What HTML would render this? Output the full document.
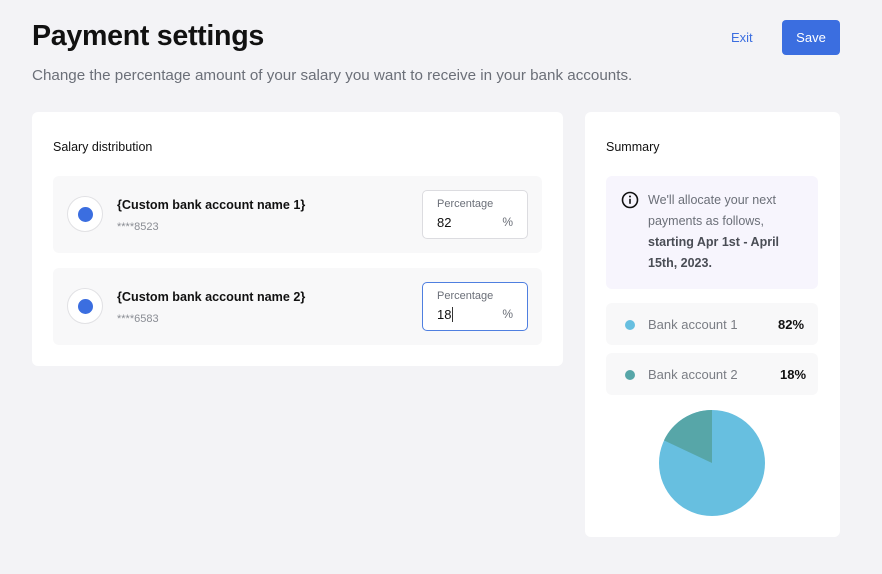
<!DOCTYPE html>
<html><head><style>
*{box-sizing:border-box;margin:0;padding:0}
body{width:882px;height:574px;background:#f3f3f6;font-family:"Liberation Sans",sans-serif;position:relative;overflow:hidden;color:#111}
.abs{position:absolute}
h1{position:absolute;left:32px;top:20px;font-size:28.6px;font-weight:700;color:#111;letter-spacing:-0.3px}
.sub{left:32px;top:67px;font-size:15.2px;color:#6b6f78}
.exit{left:731px;top:30px;font-size:13px;color:#3b6ee0}
.save{left:782px;top:20px;width:58px;height:35px;background:#3b6ee0;border-radius:4px;color:#fff;font-size:13px;text-align:center;line-height:35px}
.card{background:#fff;border-radius:6px}
.row{background:#f8f8f9;border-radius:6px}
.radio{width:36px;height:36px;border-radius:50%;border:1px solid #e1e1e4;background:#fff}
.radio:after{content:"";position:absolute;left:10px;top:10px;width:15px;height:15px;border-radius:50%;background:#3b6ee0}
.name{font-size:12.6px;font-weight:700}
.acct{font-size:11px;color:#8a8d94}
.inp{width:106px;height:49px;border:1px solid #dcdce0;border-radius:5px;background:#fff}
.inp .l{position:absolute;left:14px;top:7px;font-size:11px;color:#6b6f78}
.inp .v{position:absolute;left:14px;top:24px;font-size:13px}
.inp .p{position:absolute;right:14px;top:24px;font-size:12px;color:#6b6f78}
</style></head><body>
<h1>Payment settings</h1>
<div class="abs sub">Change the percentage amount of your salary you want to receive in your bank accounts.</div>
<div class="abs exit">Exit</div>
<div class="abs save">Save</div>

<div class="abs card" style="left:32px;top:112px;width:531px;height:254px"></div>
<div class="abs" style="left:53px;top:140px;font-size:12.5px">Salary distribution</div>

<div class="abs row" style="left:53px;top:176px;width:489px;height:77px"></div>
<div class="abs radio" style="left:67px;top:196px"></div>
<div class="abs name" style="left:117px;top:198px">{Custom bank account name 1}</div>
<div class="abs acct" style="left:117px;top:221px">****8523</div>
<div class="abs inp" style="left:422px;top:190px"><span class="l">Percentage</span><span class="v">82</span><span class="p">%</span></div>

<div class="abs row" style="left:53px;top:268px;width:489px;height:77px"></div>
<div class="abs radio" style="left:67px;top:288px"></div>
<div class="abs name" style="left:117px;top:290px">{Custom bank account name 2}</div>
<div class="abs acct" style="left:117px;top:313px">****6583</div>
<div class="abs inp" style="left:422px;top:282px;border-color:#4f7fe0"><span class="l">Percentage</span><span class="v">18<span style="display:inline-block;width:1px;height:15px;background:#333;vertical-align:-3px;margin-left:1px"></span></span><span class="p">%</span></div>

<div class="abs card" style="left:585px;top:112px;width:255px;height:425px"></div>
<div class="abs" style="left:606px;top:140px;font-size:12.5px">Summary</div>
<div class="abs" style="left:606px;top:176px;width:212px;height:113px;background:#f7f5fd;border-radius:6px"></div>
<svg class="abs" style="left:621px;top:191px" width="18" height="18" viewBox="0 0 18 18"><circle cx="9" cy="9" r="7.5" fill="none" stroke="#111" stroke-width="1.6"/><circle cx="9" cy="5.5" r="1" fill="#111"/><rect x="8.2" y="7.8" width="1.6" height="5" fill="#111"/></svg>
<div class="abs" style="left:648px;top:190px;width:150px;font-size:12.5px;line-height:21px;color:#6b6f78">We'll allocate your next payments as follows, <b style="color:#4a4d55">starting Apr 1st - April 15th, 2023.</b></div>

<div class="abs row" style="left:606px;top:303px;width:212px;height:42px"></div>
<div class="abs" style="left:625px;top:320px;width:10px;height:10px;border-radius:50%;background:#67bfe0"></div>
<div class="abs" style="left:648px;top:317px;font-size:13px;color:#7a7d84">Bank account 1</div>
<div class="abs" style="left:778px;top:317px;font-size:13px;font-weight:700">82%</div>
<div class="abs row" style="left:606px;top:353px;width:212px;height:42px"></div>
<div class="abs" style="left:625px;top:370px;width:10px;height:10px;border-radius:50%;background:#57a6a8"></div>
<div class="abs" style="left:648px;top:367px;font-size:13px;color:#7a7d84">Bank account 2</div>
<div class="abs" style="left:780px;top:367px;font-size:13px;font-weight:700">18%</div>

<svg class="abs" style="left:0;top:0" width="882" height="574"><circle cx="712" cy="463" r="53" fill="#67bfe0"/><path d="M712 463 L712 410 A53 53 0 0 0 664 440.4 Z" fill="#57a6a8"/></svg>
</body></html>
